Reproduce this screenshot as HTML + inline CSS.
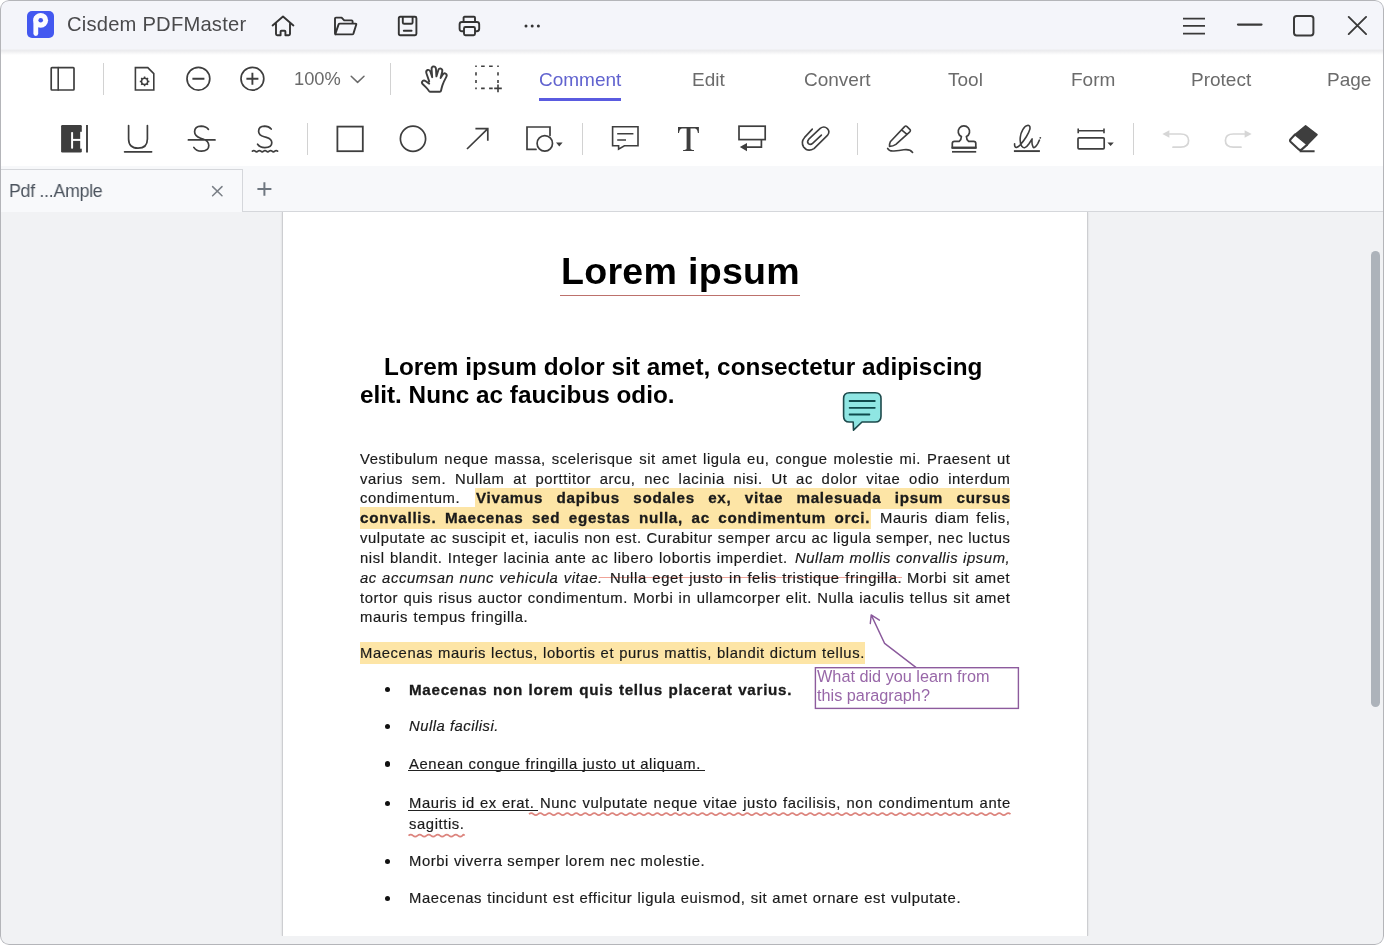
<!DOCTYPE html>
<html>
<head>
<meta charset="utf-8">
<title>Cisdem PDFMaster</title>
<style>
*{box-sizing:border-box;margin:0;padding:0}
html,body{width:1384px;height:945px;overflow:hidden;background:#fff;font-family:"Liberation Sans",sans-serif;}
#win{position:absolute;left:0;top:0;width:1384px;height:945px;background:#f1f2f4;overflow:hidden;border-radius:9px;}
#frame{position:absolute;left:0;top:0;width:1384px;height:945px;border:1.5px solid #b4b5b9;border-radius:9px 9px 9px 9px;z-index:50;pointer-events:none;}
.abs{position:absolute}
#titlebar{position:absolute;left:0;top:0;width:1384px;height:50px;background:#f4f5fa;}
#tbshadow{position:absolute;left:0;top:48.5px;width:1384px;height:6.5px;background:linear-gradient(#f2f3f7 0%,#ebebed 28%,#f5f5f6 62%,#ffffff 100%);z-index:2}
#toolbar{position:absolute;left:0;top:50px;width:1384px;height:116px;background:#fff;}
#tabstrip{position:absolute;left:0;top:166px;width:1384px;height:46px;background:#f7f8fa;border-bottom:1px solid #d5d7db;}
#tab{position:absolute;left:0;top:169px;width:243px;height:43px;background:#f8f9fb;border-top:1px solid #d5d7db;border-right:1px solid #d5d7db;}
#content{position:absolute;left:0;top:212px;width:1384px;height:733px;background:#f1f2f4;}
#page{position:absolute;left:282px;top:212px;width:806px;height:724px;background:#fff;border-left:1px solid #cdced1;border-right:1px solid #cdced1;box-shadow:0 0 2px rgba(0,0,0,0.13);clip-path:inset(0 -4px 0 -4px);}
svg{position:absolute;overflow:visible}
.ic{fill:none;stroke:#3e3e3e;stroke-width:1.7;stroke-linecap:round;stroke-linejoin:round}
.j{position:absolute;line-height:1;color:#1a1a1a;text-align:justify;text-align-last:justify;white-space:nowrap;letter-spacing:0.45px;-webkit-text-stroke:0.18px #1a1a1a}
.j,.t{will-change:transform}
.t{position:absolute;white-space:pre;line-height:1}
</style>
</head>
<body>
<div id="win">
<div id="titlebar"></div>
<div id="toolbar"></div>
<div id="tbshadow"></div>
<div id="tabstrip"></div>
<div id="tab"></div>
<div id="content"></div>
<div id="page"></div>
<!--TITLEBAR-S-->
<!-- logo -->
<svg style="left:27px;top:11px" width="27" height="27" viewBox="0 0 27 27">
 <rect x="0" y="0" width="27" height="27" rx="5" fill="#4358f0"/>
 <circle cx="13.7" cy="9.3" r="7.4" fill="#fbfbff"/>
 <rect x="6.4" y="5" width="4.8" height="20" rx="2.4" fill="#fbfbff"/>
 <circle cx="13.7" cy="9.3" r="2.3" fill="#4054ee"/>
</svg>
<div class="t" style="left:67.2px;top:13.9px;font-size:20.2px;color:#4a4a4c;letter-spacing:0.2px">Cisdem PDFMaster</div>
<!-- home -->
<svg style="left:270px;top:14px" width="26" height="24" viewBox="0 0 26 24">
 <path class="ic" style="stroke-width:1.9;stroke:#333" d="M2.6 11.4 L13 2.6 L23.4 11.4 M6 9 V20 Q6 21.2 7.2 21.2 H10.6 V17.6 Q10.6 16.8 11.4 16.8 H14.6 Q15.4 16.8 15.4 17.6 V21.2 H18.8 Q20 21.2 20 20 V9"/>
</svg>
<!-- folder -->
<svg style="left:333px;top:15px" width="26" height="22" viewBox="0 0 26 22">
 <path class="ic" style="stroke-width:1.9;stroke:#333" d="M2 18.6 V3.6 Q2 2.6 3 2.6 H8.6 L11.2 5.4 H18.6 Q19.6 5.4 19.6 6.4 V8.6 M2.2 19.4 L5.6 9.4 Q5.9 8.6 6.8 8.6 H22.4 Q23.6 8.6 23.2 9.8 L20.4 18.6 Q20.1 19.4 19.2 19.4 H2.4"/>
</svg>
<!-- save -->
<svg style="left:397px;top:15px" width="22" height="22" viewBox="0 0 22 22">
 <path class="ic" style="stroke-width:1.9;stroke:#333" d="M3.2 1.8 H18 Q19.4 1.8 19.4 3.2 V18.8 Q19.4 20.2 18 20.2 H3.2 Q1.8 20.2 1.8 18.8 V3.2 Q1.8 1.8 3.2 1.8 Z M5.8 2 V7.4 Q5.8 8.8 7.2 8.8 H14.2 Q15.6 8.8 15.6 7.4 V2 M6.8 15.8 H14.6"/>
</svg>
<!-- print -->
<svg style="left:458px;top:15px" width="24" height="22" viewBox="0 0 24 22">
 <path class="ic" style="stroke-width:1.9;stroke:#333" d="M5.6 7 V2.8 Q5.6 1.8 6.6 1.8 H16 Q17 1.8 17 2.8 V7 M5.8 16.2 H4 Q1.6 16.2 1.6 13.8 V9.4 Q1.6 7 4 7 H18.8 Q21.2 7 21.2 9.4 V13.8 Q21.2 16.2 18.8 16.2 H17 M7.4 12 H15.6 Q17 12 17 13.4 V18.8 Q17 20.2 15.6 20.2 H7.4 Q6 20.2 6 18.8 V13.4 Q6 12 7.4 12 Z"/>
</svg>
<!-- dots -->
<svg style="left:524px;top:23px" width="18" height="6" viewBox="0 0 18 6"><circle cx="2" cy="3" r="1.5" fill="#333"/><circle cx="8.2" cy="3" r="1.5" fill="#333"/><circle cx="14.4" cy="3" r="1.5" fill="#333"/></svg>
<!-- window controls -->
<svg style="left:1180px;top:12px" width="192" height="28" viewBox="0 0 192 28">
 <path class="ic" style="stroke-width:1.9;stroke:#3a3a3a;stroke-linecap:butt" d="M3 6.6 H25 M3 13.9 H25 M3 21.6 H25"/>
 <path class="ic" style="stroke-width:2.2;stroke:#3a3a3a" d="M58 12.6 H81.5"/>
 <rect class="ic" style="stroke-width:2;stroke:#3a3a3a" x="114" y="4" width="19.4" height="19.4" rx="2.6"/>
 <path class="ic" style="stroke-width:1.9;stroke:#3a3a3a" d="M168.7 4.9 L186.1 22.1 M186.1 4.9 L168.7 22.1"/>
</svg>
<!--TITLEBAR-E-->
<!--TOOLBAR1-S-->
<!-- sidebar icon -->
<svg style="left:48px;top:64px" width="30" height="30" viewBox="0 0 30 30">
 <rect class="ic" style="stroke-width:1.7;stroke-linejoin:miter" x="3.2" y="3.6" width="22.8" height="22.4" rx="0.8"/>
 <path class="ic" style="stroke-width:1.6" d="M10.2 3.6 V26"/>
</svg>
<div class="abs" style="left:103px;top:63px;width:1px;height:32px;background:#d2d2d2"></div>
<!-- doc gear -->
<svg style="left:132px;top:64px" width="26" height="30" viewBox="0 0 26 30">
 <path class="ic" style="stroke-width:1.6;stroke-linejoin:miter" d="M3.4 3.6 H15.8 L21.8 9.6 V26 H3.4 Z"/>
 <circle class="ic" style="stroke-width:1.5" cx="12.6" cy="17.4" r="3.1"/>
 <path class="ic" style="stroke-width:1.5;stroke-linecap:butt" d="M12.6 12.6 V14.1 M12.6 20.7 V22.2 M7.8 17.4 H9.3 M15.9 17.4 H17.4 M9.2 14 L10.3 15.1 M14.9 19.7 L16 20.8 M16 14 L14.9 15.1 M10.3 19.7 L9.2 20.8"/>
</svg>
<!-- minus -->
<svg style="left:184px;top:64px" width="30" height="30" viewBox="0 0 30 30">
 <circle class="ic" style="stroke-width:1.7" cx="14.4" cy="14.7" r="11.4"/>
 <path class="ic" style="stroke-width:1.9;stroke-linecap:butt" d="M8.4 14.7 H20.4"/>
</svg>
<!-- plus -->
<svg style="left:238px;top:64px" width="30" height="30" viewBox="0 0 30 30">
 <circle class="ic" style="stroke-width:1.7" cx="14.4" cy="14.7" r="11.4"/>
 <path class="ic" style="stroke-width:1.9;stroke-linecap:butt" d="M8.4 14.7 H20.4 M14.4 8.7 V20.7"/>
</svg>
<div class="t" style="left:294px;top:69.5px;font-size:18.3px;color:#6a6a6a">100%</div>
<svg style="left:349px;top:74px" width="18" height="12" viewBox="0 0 18 12"><path class="ic" style="stroke:#6a6a6a;stroke-width:1.5" d="M2.2 2.2 L8.6 8.4 L15 2.2"/></svg>
<div class="abs" style="left:390px;top:63px;width:1px;height:32px;background:#d2d2d2"></div>
<!-- hand -->
<svg style="left:419px;top:63px" width="32" height="32" viewBox="0 0 32 32">
 <path class="ic" style="stroke-width:1.9" d="M10.2 18.4 L7.4 10.2 Q6.6 7.8 8.6 7 Q10.6 6.4 11.4 8.8 L13.2 14.2 L12.6 6.4 Q12.4 3.6 14.6 3.4 Q16.8 3.4 17 6.2 L17.4 13.4 L19.2 7.4 Q19.9 5 21.9 5.6 Q23.8 6.3 23.2 8.8 L21.6 15 L23.8 11.6 Q25.1 9.7 26.8 10.7 Q28.4 11.8 27.3 13.9 Q24.6 18.8 23.4 22.4 Q22.6 25 22 27.8 Q21.8 28.8 20.8 28.8 H11.4 Q10.6 28.8 10 28 Q8.6 26 6.8 24.2 L3.6 21 Q2.2 19.4 3.6 18.1 Q5 17 6.8 18.2 L10.2 20.6"/>
</svg>
<!-- dashed select -->
<svg style="left:472px;top:62px" width="32" height="32" viewBox="0 0 32 32">
 <path class="ic" style="stroke-width:1.6;stroke-linecap:butt" d="M9.1 4.2 H12.7 M17.1 4.2 H20.7 M9.1 26.4 H12.7 M17.1 26.4 H20.7 M4 10.3 V13.5 M4 17.9 V21.1 M26 10.3 V13.5 M26 17.9 V21.1 M3.2 4.2 H4.8 M25.2 4.2 H26.8 M3.2 26.4 H4.8"/>
 <path class="ic" style="stroke-width:1.6;stroke-linecap:butt" d="M22.2 26.4 H29.8 M26 22.6 V30.2"/>
</svg>
<!-- main tabs -->
<div class="t" style="left:539px;top:69.5px;font-size:19px;color:#6163cf">Comment</div>
<div class="abs" style="left:539.2px;top:98.2px;width:81.9px;height:3.2px;background:#5a5be0"></div>
<div class="t" style="left:692px;top:69.5px;font-size:19px;color:#6b6b6b">Edit</div>
<div class="t" style="left:803.5px;top:69.5px;font-size:19px;color:#6b6b6b">Convert</div>
<div class="t" style="left:947.5px;top:69.5px;font-size:19px;color:#6b6b6b">Tool</div>
<div class="t" style="left:1071px;top:69.5px;font-size:19px;color:#6b6b6b">Form</div>
<div class="t" style="left:1191px;top:69.5px;font-size:19px;color:#6b6b6b">Protect</div>
<div class="t" style="left:1327px;top:69.5px;font-size:19px;color:#6b6b6b">Page</div>
<!--TOOLBAR1-E-->
<!--TOOLBAR2-S-->
<!-- highlight icon -->
<svg style="left:58px;top:122px" width="34" height="34" viewBox="0 0 34 34">
 <rect x="3.1" y="3.1" width="20.7" height="27.3" rx="1.2" fill="#3e3e3e"/>
 <rect x="13.1" y="10" width="2" height="16.7" rx="0.8" fill="#fff"/>
 <rect x="14.6" y="16.9" width="9.4" height="2" fill="#fff"/>
 <rect x="22.2" y="9.8" width="2" height="16.9" fill="#fff"/>
 <path class="ic" style="stroke-width:1.9;stroke-linecap:butt" d="M29 3.1 V30.4"/>
</svg>
<!-- underline -->
<svg style="left:122px;top:122px" width="34" height="34" viewBox="0 0 34 34">
 <path class="ic" style="stroke-width:1.7" d="M6.6 3.6 V17 Q6.6 26.2 16 26.2 Q25.4 26.2 25.4 17 V3.6 M2.6 29.8 H29.6"/>
</svg>
<!-- strikethrough S -->
<svg style="left:186px;top:122px" width="34" height="34" viewBox="0 0 34 34">
 <path class="ic" style="stroke-width:1.7" d="M22.4 7.4 Q19.8 4.2 15.2 4.2 Q8.6 4.4 8.6 9.8 Q8.6 14.2 14.6 16.2 L17 17 Q22.8 19 22.8 23.6 Q22.8 29.2 15.4 29.2 Q10.2 29.2 7.8 25.4 M2.4 17.9 H29"/>
</svg>
<!-- squiggly S -->
<svg style="left:250px;top:122px" width="34" height="34" viewBox="0 0 34 34">
 <path class="ic" style="stroke-width:1.7" d="M21.2 7 Q18.8 4.2 14.6 4.2 Q8.6 4.4 8.6 9.2 Q8.6 13.2 14.2 14.8 L16.4 15.4 Q21.8 17 21.8 20.8 Q21.8 25.6 14.8 25.6 Q10 25.6 7.6 22.2"/>
 <path class="ic" style="stroke-width:1.6" d="M2.4 29.2 Q3.8 27.9 5.2 29.2 T8 29.2 T10.8 29.2 T13.6 29.2 T16.4 29.2 T19.2 29.2 T22 29.2 T24.8 29.2 T27.6 29.2"/>
</svg>
<div class="abs" style="left:307px;top:123px;width:1px;height:32px;background:#d2d2d2"></div>
<!-- rect -->
<svg style="left:334px;top:122px" width="34" height="34" viewBox="0 0 34 34"><rect class="ic" style="stroke-width:1.8;stroke-linejoin:miter" x="3.4" y="4.6" width="25.4" height="24.6"/></svg>
<!-- circle -->
<svg style="left:398px;top:122px" width="34" height="34" viewBox="0 0 34 34"><circle class="ic" style="stroke-width:1.7" cx="15" cy="16.8" r="12.6"/></svg>
<!-- arrow -->
<svg style="left:462px;top:122px" width="34" height="34" viewBox="0 0 34 34"><path class="ic" style="stroke-width:1.7;stroke-linecap:butt;stroke-linejoin:miter" d="M5 27 L25.6 6.8 M13.4 6.6 H25.8 V18.8"/></svg>
<!-- shapes -->
<svg style="left:524px;top:122px" width="42" height="34" viewBox="0 0 42 34">
 <path class="ic" style="stroke-width:1.7;stroke-linejoin:miter" d="M12 27.4 H3 V5 H26 V13.4"/>
 <circle class="ic" style="stroke-width:1.7" cx="20.8" cy="21.4" r="7.7"/>
 <path d="M32 20.6 H38.6 L35.3 24.6 Z" fill="#3e3e3e"/>
</svg>
<div class="abs" style="left:582px;top:123px;width:1px;height:32px;background:#d2d2d2"></div>
<!-- note -->
<svg style="left:608px;top:122px" width="34" height="34" viewBox="0 0 34 34">
 <path class="ic" style="stroke-width:1.6;stroke-linejoin:miter" d="M4.6 4.8 H30 V23.8 H16.4 L10.6 27.2 V23.8 H4.6 Z"/>
 <path class="ic" style="stroke-width:1.6;stroke-linecap:butt" d="M9.2 11.8 H25.4 M9.2 18 H18"/>
</svg>
<!-- T -->
<svg style="left:676px;top:124px" width="26" height="30" viewBox="0 0 26 30">
 <path fill="#3e3e3e" d="M2 2.9 H22.9 V9.1 H21.9 Q21.4 5 19 4.6 H14.5 V24.4 Q14.5 25.8 18 26.1 V26.9 H7.1 V26.1 Q10.6 25.8 10.6 24.4 V4.6 H5.9 Q3.5 5 3 9.1 H2 Z"/>
</svg>
<!-- callout -->
<svg style="left:736px;top:122px" width="34" height="34" viewBox="0 0 34 34">
 <rect class="ic" style="stroke-width:1.7;stroke-linejoin:miter" x="3" y="4.2" width="26.2" height="13.4"/>
 <path class="ic" style="stroke-width:1.7;stroke-linejoin:miter;stroke-linecap:butt" d="M25.4 17.6 V25.1 H10"/>
 <path d="M3.8 25.1 L11 20.9 V29.3 Z" fill="#3e3e3e"/>
</svg>
<!-- paperclip -->
<svg style="left:799px;top:122px" width="34" height="34" viewBox="0 0 34 34">
 <path class="ic" style="stroke-width:1.6" d="M13.3 7.1 L5.6 15.4 Q1.6 20 4.6 25 Q8.8 30.4 15 26.6 L28.4 13.4 Q31.4 9.8 28.4 6.6 Q25 3.6 21.2 6.4 L9.8 17.2 Q7.6 19.8 9.4 21.6 Q11.4 23.4 13.6 21.4 L22.4 13.1"/>
</svg>
<div class="abs" style="left:857px;top:123px;width:1px;height:32px;background:#d2d2d2"></div>
<!-- pencil -->
<svg style="left:884px;top:122px" width="34" height="34" viewBox="0 0 34 34">
 <path class="ic" style="stroke-width:1.6" d="M6.3 19.8 L20.6 4.6 Q21.8 3.4 23 4.6 L25.8 7.4 Q27 8.6 25.8 9.8 L11.9 22.4 Q9 24.4 5.5 24.4 Q5.2 22 6.3 19.8 Z M17.6 7.8 L23 12.4"/>
 <path class="ic" style="stroke-width:1.6" d="M3.6 26.4 Q5 29.4 10 29 Q15 28.6 19.8 27.8 Q26 27 28.6 30.4"/>
</svg>
<!-- stamp -->
<svg style="left:948px;top:122px" width="34" height="34" viewBox="0 0 34 34">
 <path class="ic" style="stroke-width:1.7" d="M13.4 14.6 A5.7 5.7 0 1 1 18.4 14.6 Q18.4 17.6 20.6 19.4 H25.6 Q27.8 19.4 27.8 21.6 V25.6 H4.3 V21.6 Q4.3 19.4 6.5 19.4 H11.2 Q13.4 17.6 13.4 14.6 Z"/>
 <path class="ic" style="stroke-width:2.1;stroke-linecap:butt" d="M3.5 25.8 H28.6"/>
 <path class="ic" style="stroke-width:1.7;stroke-linecap:butt" d="M4 29.8 H28.2"/>
</svg>
<!-- signature -->
<svg style="left:1010px;top:122px" width="36" height="34" viewBox="0 0 36 34">
 <path class="ic" style="stroke-width:1.6" d="M4.6 21.8 Q4.4 25.6 6.6 25.4 Q8.6 25 10.1 23.1 Q13.6 19 16.3 14.7 Q19 10.4 19.9 7.1 Q20.4 3.4 18.1 3.3 Q15.2 3.6 12.8 7.6 Q10.6 11.4 10.3 15.1 Q9.6 21.6 11.9 24.4 Q13 26 14.6 25.8 Q16.6 25.4 19 21.8 L22.1 16.9 Q21.6 21 22.6 23.6 Q23.2 25.8 23.9 25.6 Q25.4 25.4 27.9 21.3 L29.4 18.2"/>
 <circle cx="30.3" cy="15.8" r="0.9" fill="#3e3e3e"/>
 <path class="ic" style="stroke-width:1.9;stroke-linecap:butt" d="M3.9 29.1 H29.9"/>
</svg>
<!-- measure -->
<svg style="left:1074px;top:122px" width="42" height="34" viewBox="0 0 42 34">
 <path class="ic" style="stroke-width:1.6;stroke-linecap:butt" d="M3.6 8.8 H30.6 M4.2 6.4 V11.2 M30 6.4 V11.2"/>
 <rect class="ic" style="stroke-width:1.7" x="4" y="15.8" width="26.2" height="11" rx="1"/>
 <path d="M33.4 20.4 H39.8 L36.6 24 Z" fill="#3e3e3e"/>
</svg>
<div class="abs" style="left:1133px;top:123px;width:1px;height:32px;background:#d2d2d2"></div>
<!-- undo -->
<svg style="left:1160px;top:122px" width="34" height="34" viewBox="0 0 34 34">
 <path class="ic" style="stroke:#d6d6d6;stroke-width:1.7" d="M8 12 H20.6 Q28.6 12 28.6 18.6 Q28.6 25.2 20.6 25.2 H13"/>
 <path d="M2.4 12 L9.4 8.2 V15.8 Z" fill="#d6d6d6"/>
</svg>
<!-- redo -->
<svg style="left:1222px;top:122px" width="34" height="34" viewBox="0 0 34 34">
 <path class="ic" style="stroke:#d6d6d6;stroke-width:1.7" d="M24 12 H11.4 Q3.4 12 3.4 18.6 Q3.4 25.2 11.4 25.2 H19"/>
 <path d="M29.6 12 L22.6 8.2 V15.8 Z" fill="#d6d6d6"/>
</svg>
<!-- eraser -->
<svg style="left:1286px;top:122px" width="36" height="34" viewBox="0 0 36 34">
 <path d="M19.6 3.8 L31 12.6 L21.2 22.6 L9 12.6 Z" fill="#3e3e3e" stroke="#3e3e3e" stroke-width="1.6" stroke-linejoin="round"/>
 <path class="ic" style="stroke-width:2.1" d="M9 12.6 L4.6 17.2 Q3.4 18.6 4.8 20 L12.8 27.4 Q14.4 28.6 15.8 27.4 L21.2 22.6"/>
 <path class="ic" style="stroke-width:2;stroke-linecap:butt" d="M13.6 29.3 H28.6"/>
</svg>
<!--TOOLBAR2-E-->
<!--TABS-S-->
<div class="t" style="left:8.6px;top:181px;font-size:19px;color:#4b535d;letter-spacing:-0.3px;transform-origin:0 0;transform:scaleX(0.935)">Pdf ...Ample</div>
<svg style="left:210px;top:184px" width="14" height="14" viewBox="0 0 14 14"><path class="ic" style="stroke:#7b8087;stroke-width:1.5" d="M2.6 2.6 L12 11.8 M12 2.6 L2.6 11.8"/></svg>
<svg style="left:255px;top:180px" width="18" height="18" viewBox="0 0 18 18"><path class="ic" style="stroke:#6f7780;stroke-width:2;stroke-linecap:butt" d="M2.4 9 H16.4 M9.4 2.2 V15.8"/></svg>
<!--TABS-E-->
<!--DOC-S-->
<div class="abs" style="left:475.3px;top:487.6px;width:534.7px;height:21.4px;background:#fde5a6"></div>
<div class="abs" style="left:359.8px;top:507.4px;width:510.8px;height:21.3px;background:#fde5a6"></div>
<div class="abs" style="left:359.8px;top:641.8px;width:505.4px;height:21.8px;background:#fde5a6"></div>
<div class="abs" style="left:599px;top:576.9px;width:302.5px;height:1.6px;background:#f0a398"></div>
<div class="j" style="left:360.1px;top:451.67px;width:650.5px;font-size:14.8px;letter-spacing:0.6px;">Vestibulum neque massa, scelerisque sit amet ligula eu, congue molestie mi. Praesent ut</div>
<div class="j" style="left:360.1px;top:471.52px;width:650.5px;font-size:14.8px;letter-spacing:0.6px;">varius sem. Nullam at porttitor arcu, nec lacinia nisi. Ut ac dolor vitae odio interdum</div>
<div class="j" style="left:360.1px;top:491.37px;width:102.7px;font-size:14.8px;letter-spacing:0.6px;">condimentum.</div>
<div class="j" style="left:476.0px;top:490.08px;width:534.6px;font-size:15.2px;letter-spacing:0.72px;font-weight:bold;-webkit-text-stroke:0.3px #1a1a1a;">Vivamus dapibus sodales ex, vitae malesuada ipsum cursus</div>
<div class="j" style="left:360.1px;top:510.43px;width:510.1px;font-size:15.2px;letter-spacing:0.72px;font-weight:bold;-webkit-text-stroke:0.3px #1a1a1a;">convallis. Maecenas sed egestas nulla, ac condimentum orci.</div>
<div class="j" style="left:880.2px;top:511.22px;width:130.4px;font-size:14.8px;letter-spacing:0.6px;">Mauris diam felis,</div>
<div class="j" style="left:360.1px;top:531.07px;width:650.5px;font-size:14.8px;letter-spacing:0.6px;">vulputate ac suscipit et, iaculis non est. Curabitur semper arcu ac ligula semper, nec luctus</div>
<div class="j" style="left:360.1px;top:550.92px;width:427.8px;font-size:14.8px;letter-spacing:0.6px;">nisl blandit. Integer lacinia ante ac libero lobortis imperdiet.</div>
<div class="j" style="left:795.3px;top:550.92px;width:215.3px;font-size:14.8px;letter-spacing:0.6px;font-style:italic;">Nullam mollis convallis ipsum,</div>
<div class="j" style="left:360.1px;top:570.77px;width:242.7px;font-size:14.8px;letter-spacing:0.6px;font-style:italic;">ac accumsan nunc vehicula vitae.</div>
<div class="j" style="left:609.8px;top:570.77px;width:292.2px;font-size:14.8px;letter-spacing:0.6px;">Nulla eget justo in felis tristique fringilla.</div>
<div class="j" style="left:907.3px;top:570.77px;width:103.3px;font-size:14.8px;letter-spacing:0.6px;">Morbi sit amet</div>
<div class="j" style="left:360.1px;top:590.62px;width:650.5px;font-size:14.8px;letter-spacing:0.6px;">tortor quis risus auctor condimentum. Morbi in ullamcorper elit. Nulla iaculis tellus sit amet</div>
<div class="j" style="left:360.1px;top:610.47px;width:168.3px;font-size:14.8px;letter-spacing:0.6px;">mauris tempus fringilla.</div>
<div class="j" style="left:360.1px;top:645.67px;width:504.9px;font-size:14.8px;letter-spacing:0.6px;">Maecenas mauris lectus, lobortis et purus mattis, blandit dictum tellus.</div>
<div class="abs" style="left:384.7px;top:686.9px;width:5.2px;height:5.2px;border-radius:50%;background:#111"></div>
<div class="j" style="left:409.0px;top:681.78px;width:383.2px;font-size:15.2px;letter-spacing:0.72px;font-weight:bold;-webkit-text-stroke:0.3px #1a1a1a;">Maecenas non lorem quis tellus placerat varius.</div>
<div class="abs" style="left:384.7px;top:724.0px;width:5.2px;height:5.2px;border-radius:50%;background:#111"></div>
<div class="j" style="left:409.0px;top:719.37px;width:89.8px;font-size:14.8px;letter-spacing:0.5px;font-style:italic;">Nulla facilisi.</div>
<div class="abs" style="left:384.7px;top:761.4px;width:5.2px;height:5.2px;border-radius:50%;background:#111"></div>
<div class="j" style="left:409.0px;top:756.77px;width:292.0px;font-size:14.8px;letter-spacing:0.6px;">Aenean congue fringilla justo ut aliquam.</div>
<div class="abs" style="left:408.3px;top:770.2px;width:297px;height:1.1px;background:#222"></div>
<div class="abs" style="left:384.7px;top:800.5px;width:5.2px;height:5.2px;border-radius:50%;background:#111"></div>
<div class="j" style="left:409.0px;top:796.07px;width:125.5px;font-size:14.8px;letter-spacing:0.6px;">Mauris id ex erat.</div>
<div class="abs" style="left:408.3px;top:809.5px;width:130px;height:1.1px;background:#222"></div>
<div class="j" style="left:539.8px;top:796.07px;width:470.8px;font-size:14.8px;letter-spacing:0.6px;">Nunc vulputate neque vitae justo facilisis, non condimentum ante</div>
<div class="j" style="left:409.0px;top:817.07px;width:56.0px;font-size:14.8px;letter-spacing:0.6px;">sagittis.</div>
<div class="abs" style="left:384.7px;top:858.8px;width:5.2px;height:5.2px;border-radius:50%;background:#111"></div>
<div class="j" style="left:409.0px;top:853.87px;width:296.2px;font-size:14.8px;letter-spacing:0.6px;">Morbi viverra semper lorem nec molestie.</div>
<div class="abs" style="left:384.7px;top:895.6px;width:5.2px;height:5.2px;border-radius:50%;background:#111"></div>
<div class="j" style="left:409.0px;top:891.17px;width:552.1px;font-size:14.8px;letter-spacing:0.6px;">Maecenas tincidunt est efficitur ligula euismod, sit amet ornare est vulputate.</div>
<svg style="left:0;top:0" width="1384" height="945" viewBox="0 0 1384 945"><path d="M529.0 814.1 Q531.25 812.10 533.50 814.1 Q535.75 816.10 538.00 814.1 Q540.25 812.10 542.50 814.1 Q544.75 816.10 547.00 814.1 Q549.25 812.10 551.50 814.1 Q553.75 816.10 556.00 814.1 Q558.25 812.10 560.50 814.1 Q562.75 816.10 565.00 814.1 Q567.25 812.10 569.50 814.1 Q571.75 816.10 574.00 814.1 Q576.25 812.10 578.50 814.1 Q580.75 816.10 583.00 814.1 Q585.25 812.10 587.50 814.1 Q589.75 816.10 592.00 814.1 Q594.25 812.10 596.50 814.1 Q598.75 816.10 601.00 814.1 Q603.25 812.10 605.50 814.1 Q607.75 816.10 610.00 814.1 Q612.25 812.10 614.50 814.1 Q616.75 816.10 619.00 814.1 Q621.25 812.10 623.50 814.1 Q625.75 816.10 628.00 814.1 Q630.25 812.10 632.50 814.1 Q634.75 816.10 637.00 814.1 Q639.25 812.10 641.50 814.1 Q643.75 816.10 646.00 814.1 Q648.25 812.10 650.50 814.1 Q652.75 816.10 655.00 814.1 Q657.25 812.10 659.50 814.1 Q661.75 816.10 664.00 814.1 Q666.25 812.10 668.50 814.1 Q670.75 816.10 673.00 814.1 Q675.25 812.10 677.50 814.1 Q679.75 816.10 682.00 814.1 Q684.25 812.10 686.50 814.1 Q688.75 816.10 691.00 814.1 Q693.25 812.10 695.50 814.1 Q697.75 816.10 700.00 814.1 Q702.25 812.10 704.50 814.1 Q706.75 816.10 709.00 814.1 Q711.25 812.10 713.50 814.1 Q715.75 816.10 718.00 814.1 Q720.25 812.10 722.50 814.1 Q724.75 816.10 727.00 814.1 Q729.25 812.10 731.50 814.1 Q733.75 816.10 736.00 814.1 Q738.25 812.10 740.50 814.1 Q742.75 816.10 745.00 814.1 Q747.25 812.10 749.50 814.1 Q751.75 816.10 754.00 814.1 Q756.25 812.10 758.50 814.1 Q760.75 816.10 763.00 814.1 Q765.25 812.10 767.50 814.1 Q769.75 816.10 772.00 814.1 Q774.25 812.10 776.50 814.1 Q778.75 816.10 781.00 814.1 Q783.25 812.10 785.50 814.1 Q787.75 816.10 790.00 814.1 Q792.25 812.10 794.50 814.1 Q796.75 816.10 799.00 814.1 Q801.25 812.10 803.50 814.1 Q805.75 816.10 808.00 814.1 Q810.25 812.10 812.50 814.1 Q814.75 816.10 817.00 814.1 Q819.25 812.10 821.50 814.1 Q823.75 816.10 826.00 814.1 Q828.25 812.10 830.50 814.1 Q832.75 816.10 835.00 814.1 Q837.25 812.10 839.50 814.1 Q841.75 816.10 844.00 814.1 Q846.25 812.10 848.50 814.1 Q850.75 816.10 853.00 814.1 Q855.25 812.10 857.50 814.1 Q859.75 816.10 862.00 814.1 Q864.25 812.10 866.50 814.1 Q868.75 816.10 871.00 814.1 Q873.25 812.10 875.50 814.1 Q877.75 816.10 880.00 814.1 Q882.25 812.10 884.50 814.1 Q886.75 816.10 889.00 814.1 Q891.25 812.10 893.50 814.1 Q895.75 816.10 898.00 814.1 Q900.25 812.10 902.50 814.1 Q904.75 816.10 907.00 814.1 Q909.25 812.10 911.50 814.1 Q913.75 816.10 916.00 814.1 Q918.25 812.10 920.50 814.1 Q922.75 816.10 925.00 814.1 Q927.25 812.10 929.50 814.1 Q931.75 816.10 934.00 814.1 Q936.25 812.10 938.50 814.1 Q940.75 816.10 943.00 814.1 Q945.25 812.10 947.50 814.1 Q949.75 816.10 952.00 814.1 Q954.25 812.10 956.50 814.1 Q958.75 816.10 961.00 814.1 Q963.25 812.10 965.50 814.1 Q967.75 816.10 970.00 814.1 Q972.25 812.10 974.50 814.1 Q976.75 816.10 979.00 814.1 Q981.25 812.10 983.50 814.1 Q985.75 816.10 988.00 814.1 Q990.25 812.10 992.50 814.1 Q994.75 816.10 997.00 814.1 Q999.25 812.10 1001.50 814.1 Q1003.75 816.10 1006.00 814.1 Q1008.25 812.10 1010.50 814.1" fill="none" stroke="#dc847d" stroke-width="1.6"/><path d="M408.5 835.6 Q410.75 833.60 413.00 835.6 Q415.25 837.60 417.50 835.6 Q419.75 833.60 422.00 835.6 Q424.25 837.60 426.50 835.6 Q428.75 833.60 431.00 835.6 Q433.25 837.60 435.50 835.6 Q437.75 833.60 440.00 835.6 Q442.25 837.60 444.50 835.6 Q446.75 833.60 449.00 835.6 Q451.25 837.60 453.50 835.6 Q455.75 833.60 458.00 835.6 Q460.25 837.60 462.50 835.6 Q463.50 833.60 464.50 835.6" fill="none" stroke="#dc847d" stroke-width="1.6"/></svg>
<div class="t" style="left:560.8px;top:252.67px;font-size:37.6px;letter-spacing:0.28px;font-weight:bold;color:#000">Lorem ipsum</div>
<div class="abs" style="left:560.3px;top:294.7px;width:239.6px;height:1.5px;background:#bd716c"></div>
<div class="t" style="left:383.9px;top:354.83px;font-size:24.3px;letter-spacing:0.035px;font-weight:bold;color:#000">Lorem ipsum dolor sit amet, consectetur adipiscing</div>
<div class="t" style="left:359.9px;top:382.83px;font-size:24.3px;letter-spacing:0px;font-weight:bold;color:#000">elit. Nunc ac faucibus odio.</div>
<svg style="left:840px;top:390px" width="46" height="44" viewBox="0 0 46 44">
 <path d="M9.4 2.8 H35.2 Q41 2.8 41 8.6 V26.2 Q41 32 35.2 32 H22 L13.5 40.2 L13.2 32 H9.4 Q3.6 32 3.6 26.2 V8.6 Q3.6 2.8 9.4 2.8 Z" fill="#8fe6e3" stroke="#1d4a4c" stroke-width="1.6" stroke-linejoin="round"/>
 <path d="M9.6 11 H34.8 M9.6 17.8 H34.8 M9.6 24.5 H29.4" fill="none" stroke="#0f4a4c" stroke-width="1.8" stroke-linecap="round"/>
</svg>
<svg style="left:0;top:0" width="1384" height="945" viewBox="0 0 1384 945">
 <path d="M916.2 667.6 L884.6 643.4 L871.2 614.9 M870.3 623.6 L871.2 614.9 L879.4 620.2" fill="none" stroke="#8a5a9c" stroke-width="1.4" stroke-linejoin="round" stroke-linecap="round"/>
 <rect x="815.4" y="667.7" width="203" height="40.7" fill="#fff" stroke="#8d5b9d" stroke-width="1.4"/>
</svg>
<div class="t" style="left:817.4px;top:667.57px;font-size:16.25px;color:#9867a8">What did you learn from</div>
<div class="t" style="left:817.4px;top:686.57px;font-size:16.25px;color:#9867a8">this paragraph?</div>
<!--DOC-E-->
<!--SCROLL-S-->
<div class="abs" style="left:1371px;top:251px;width:9.4px;height:456px;border-radius:5px;background:#adb3ba"></div>
<!--SCROLL-E-->
<div id="frame"></div>
</div>
</body>
</html>
